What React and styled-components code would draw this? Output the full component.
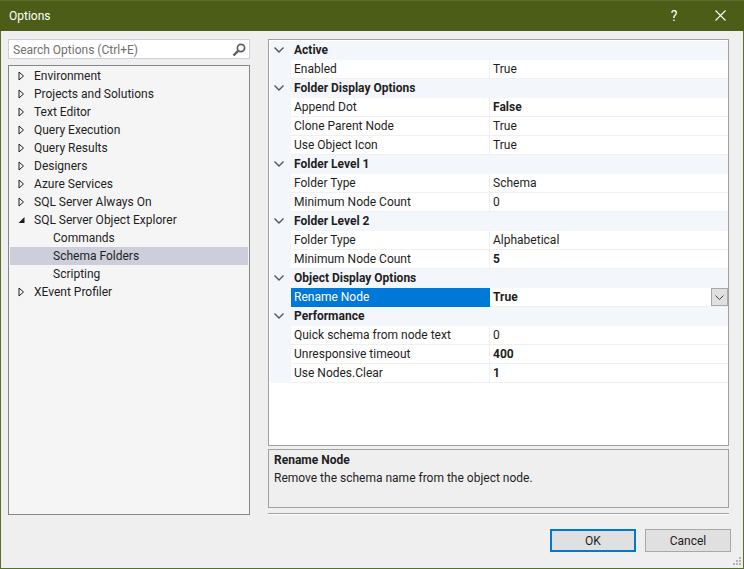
import React from "react";
import styled, { createGlobalStyle } from "styled-components";

const Global = createGlobalStyle`
  * { box-sizing: border-box; }
  html, body { margin: 0; padding: 0; background: #efefef; }
  body { font-family: Roboto, "Open Sans", sans-serif; font-size: 12px; color: #1e1e1e; }
`;

const Window = styled.div`
  position: relative;
  width: 744px;
  height: 569px;
  display: flex;
  flex-direction: column;
  background: #efefef;
  border: 1px solid #5a6e2c;
  border-top: none;
`;

const TitleBar = styled.div`
  height: 31px;
  margin: 0 -1px;
  flex: none;
  display: flex;
  align-items: center;
  padding: 0 1px 1px 9px;
  background: #4b5d16;
  border-top: 1px solid #5a6e2c;
  color: #fff;
`;

const Title = styled.div`
  flex: 1;
  line-height: 16px;
`;

const TitleButton = styled.div`
  width: 46px;
  height: 29px;
  display: flex;
  align-items: center;
  justify-content: center;
  font-size: 14px;
`;

const Main = styled.div`
  height: 484px;
  flex: none;
  display: flex;
  gap: 18px;
  padding: 8px 14px 0 7px;
`;

const LeftColumn = styled.div`
  width: 242px;
  display: flex;
  flex-direction: column;
  gap: 6px;
`;

const Search = styled.div`
  height: 20px;
  flex: none;
  display: flex;
  align-items: center;
  justify-content: space-between;
  padding: 2px 3px 0 4px;
  background: #fff;
  border: 1px solid #cccedb;
  color: #717171;
`;

const Tree = styled.div`
  flex: 1;
  padding: 1px;
  background: #f5f5f5;
  border: 1px solid #84858f;
`;

const TreeRow = styled.div`
  height: 18px;
  display: flex;
  align-items: center;
  padding-left: ${({ $child }) => ($child ? "43px" : "8px")};
  background: ${({ $selected }) => ($selected ? "#cccedb" : "transparent")};
  line-height: 18px;
`;

const Arrow = styled.svg`
  width: 7px;
  height: 10px;
  margin-right: 9px;
  flex: none;
`;

const RightColumn = styled.div`
  width: 461px;
  display: flex;
  flex-direction: column;
`;

const Grid = styled.div`
  height: 407px;
  flex: none;
  padding: 1px 0 1px 1px;
  background: #fff;
  border: 1px solid #a0a0a0;
`;

const CategoryRow = styled.div`
  height: 19px;
  display: flex;
  align-items: center;
  padding-bottom: 1px;
  background: #f3f6fb;
  font-weight: 700;
`;

const Chevron = styled.svg`
  width: 10px;
  height: 6px;
  margin: 0 10px 0 4px;
  flex: none;
`;

const PropertyRow = styled.div`
  height: 19px;
  display: flex;
  background: #f3f6fb;
  padding-left: 21px;
`;

const PropertyName = styled.div`
  width: 199px;
  flex: none;
  padding-left: 3px;
  line-height: 18px;
  background: ${({ $active }) => ($active ? "#0078d7" : "#fff")};
  color: ${({ $active }) => ($active ? "#fff" : "#1e1e1e")};
  border-bottom: 1px solid ${({ $active }) => ($active ? "#0078d7" : "#f0f0f0")};
  border-right: 1px solid ${({ $active }) => ($active ? "#0078d7" : "#f0f0f0")};
`;

const PropertyValue = styled.div`
  flex: 1;
  display: flex;
  justify-content: space-between;
  padding-left: 3px;
  line-height: 18px;
  background: #fff;
  font-weight: ${({ $bold }) => ($bold ? 700 : 400)};
  border-bottom: 1px solid #f0f0f0;
`;

const DropButton = styled.div`
  width: 17px;
  height: 18px;
  display: flex;
  align-items: center;
  justify-content: center;
  background: #e0e0e0;
  border: 1px solid #a8a8a8;
`;

const Description = styled.div`
  height: 59px;
  flex: none;
  margin-top: 3px;
  padding: 1px 5px;
  border: 1px solid #a0a0a0;
  line-height: 18px;
`;

const DescriptionTitle = styled.div`
  font-weight: 700;
`;

const Rule = styled.div`
  height: 2px;
  flex: none;
  margin-top: 5px;
  background: #a0a0a0;
  border-bottom: 1px solid #fff;
`;

const Footer = styled.div`
  display: flex;
  justify-content: flex-end;
  gap: 9px;
  padding: 14px 12px 0 0;
`;

const Button = styled.div`
  width: 86px;
  height: 23px;
  display: flex;
  align-items: center;
  justify-content: center;
  background: #e0e0e0;
  border: ${({ $primary }) => ($primary ? "2px solid #0078d7" : "1px solid #a8a8a8")};
`;

const Grip = styled.svg`
  position: absolute;
  right: 1px;
  bottom: 1px;
  width: 11px;
  height: 11px;
`;

const treeItems = [
  { label: "Environment" },
  { label: "Projects and Solutions" },
  { label: "Text Editor" },
  { label: "Query Execution" },
  { label: "Query Results" },
  { label: "Designers" },
  { label: "Azure Services" },
  { label: "SQL Server Always On" },
  { label: "SQL Server Object Explorer", open: true },
  { label: "Commands", child: true },
  { label: "Schema Folders", child: true, selected: true },
  { label: "Scripting", child: true },
  { label: "XEvent Profiler" },
];

const groups = [
  { title: "Active", rows: [["Enabled", "True"]] },
  {
    title: "Folder Display Options",
    rows: [
      ["Append Dot", "False", true],
      ["Clone Parent Node", "True"],
      ["Use Object Icon", "True"],
    ],
  },
  {
    title: "Folder Level 1",
    rows: [
      ["Folder Type", "Schema"],
      ["Minimum Node Count", "0"],
    ],
  },
  {
    title: "Folder Level 2",
    rows: [
      ["Folder Type", "Alphabetical"],
      ["Minimum Node Count", "5", true],
    ],
  },
  {
    title: "Object Display Options",
    rows: [["Rename Node", "True", true, true]],
  },
  {
    title: "Performance",
    rows: [
      ["Quick schema from node text", "0"],
      ["Unresponsive timeout", "400", true],
      ["Use Nodes.Clear", "1", true],
    ],
  },
];

const TreeArrow = ({ open }) => (
  <Arrow viewBox="0 0 7 10">
    {open ? (
      <path d="M6.5 2 V8 H0.5 Z" fill="#1e1e1e" />
    ) : (
      <path d="M1 1 L5.5 5 L1 9 Z" fill="none" stroke="#1e1e1e" strokeWidth="1" />
    )}
  </Arrow>
);

const GroupChevron = () => (
  <Chevron viewBox="0 0 10 6">
    <path d="M0.5 0.5 L5 5 L9.5 0.5" fill="none" stroke="#555" strokeWidth="1.4" />
  </Chevron>
);

export default function App() {
  return (
    <>
      <Global />
      <Window>
        <TitleBar>
          <Title>Options</Title>
          <TitleButton>?</TitleButton>
          <TitleButton>
            <svg width="11" height="11" viewBox="0 0 11 11">
              <path d="M0.5 0.5 L10.5 10.5 M10.5 0.5 L0.5 10.5" stroke="#fff" strokeWidth="1.1" />
            </svg>
          </TitleButton>
        </TitleBar>
        <Main>
          <LeftColumn>
            <Search>
              Search Options (Ctrl+E)
              <svg width="14" height="14" viewBox="0 0 14 14">
                <circle cx="9" cy="5" r="3.6" fill="none" stroke="#5e5e5e" strokeWidth="1.7" />
                <path d="M6.2 7.8 L1.5 12.5" stroke="#5e5e5e" strokeWidth="2.4" />
              </svg>
            </Search>
            <Tree>
              {treeItems.map((item) => (
                <TreeRow key={item.label} $child={item.child} $selected={item.selected}>
                  {!item.child && <TreeArrow open={item.open} />}
                  {item.label}
                </TreeRow>
              ))}
            </Tree>
          </LeftColumn>
          <RightColumn>
            <Grid>
              {groups.map((group) => (
                <div key={group.title}>
                  <CategoryRow>
                    <GroupChevron />
                    {group.title}
                  </CategoryRow>
                  {group.rows.map(([name, value, bold, active]) => (
                    <PropertyRow key={name}>
                      <PropertyName $active={active}>{name}</PropertyName>
                      <PropertyValue $bold={bold}>
                        {value}
                        {active && (
                          <DropButton>
                            <svg width="9" height="5" viewBox="0 0 9 5">
                              <path d="M0.5 0.5 L4.5 4.5 L8.5 0.5" fill="none" stroke="#444" />
                            </svg>
                          </DropButton>
                        )}
                      </PropertyValue>
                    </PropertyRow>
                  ))}
                </div>
              ))}
            </Grid>
            <Description>
              <DescriptionTitle>Rename Node</DescriptionTitle>
              Remove the schema name from the object node.
            </Description>
            <Rule />
          </RightColumn>
        </Main>
        <Footer>
          <Button $primary>OK</Button>
          <Button>Cancel</Button>
        </Footer>
        <Grip viewBox="0 0 11 11">
          <path d="M8 1h2v2H8z M5 4h2v2H5z M8 4h2v2H8z M2 7h2v2H2z M5 7h2v2H5z M8 7h2v2H8z" fill="#b4b4b4" />
        </Grip>
      </Window>
    </>
  );
}
